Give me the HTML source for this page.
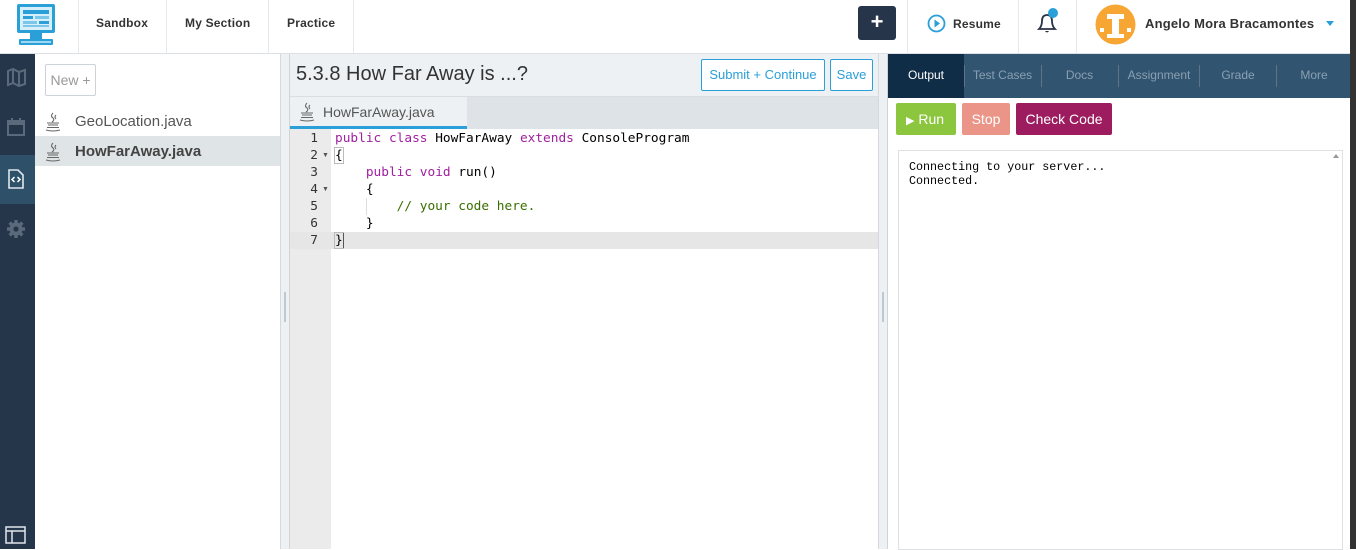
<!DOCTYPE html>
<html><head><style>
*{box-sizing:border-box;margin:0;padding:0}
body{width:1356px;height:549px;overflow:hidden;background:#fff;font-family:"Liberation Sans",sans-serif;position:relative}
.a{position:absolute}
.nav{font-size:12px;font-weight:bold;color:#333;letter-spacing:.2px}
.vl{position:absolute;top:0;height:53px;width:1px;background:#e6e9ec}
.code{font-family:"DejaVu Sans Mono",monospace;font-size:12.8px;line-height:17px;white-space:pre}
.kw{color:#a020a0}.cm{color:#3a6e00}
.tab{position:absolute;top:68px;font-size:12px;color:#8aa0b2;text-align:center}
</style></head><body>
<svg width="0" height="0" style="position:absolute"><defs><g id="java"><path d="M9 1 Q6 4 9 6 Q11 8 8 10 M12 3 Q10 5 12 7" fill="none" stroke="#666" stroke-width="1.1"/><path d="M3 11 H15 M4 13 H14 M3 15.5 H15 M2 18 Q9 20 16 18" fill="none" stroke="#666" stroke-width="1.1"/></g></defs></svg>
<!-- top bar -->
<div class="a" style="left:0;top:0;width:1350px;height:54px;background:#fff;border-bottom:1px solid #dde1e5"></div>
<svg class="a" style="left:16px;top:3px" width="40" height="42" viewBox="0 0 40 42">
<rect x="1" y="1" width="38" height="29" rx="2" fill="#2a9fd8"/>
<rect x="4" y="4" width="32" height="23" fill="#d6effb"/>
<rect x="7" y="7" width="26" height="4" fill="#2a9fd8"/>
<rect x="7" y="13" width="10" height="3" fill="#2a9fd8"/><rect x="19" y="13" width="14" height="3" fill="#7cc6ea"/>
<rect x="7" y="18" width="14" height="3" fill="#7cc6ea"/><rect x="23" y="18" width="10" height="3" fill="#2a9fd8"/>
<rect x="7" y="22" width="26" height="2" fill="#7cc6ea"/>
<rect x="14" y="30" width="12" height="6" fill="#2a9fd8"/>
<rect x="3" y="36" width="34" height="6" rx="1" fill="#2a9fd8"/><rect x="5" y="38" width="30" height="2" fill="#9dd6f2"/>
</svg>
<div class="vl" style="left:78px"></div><div class="vl" style="left:166px"></div><div class="vl" style="left:268px"></div><div class="vl" style="left:353px"></div>
<div class="a nav" style="left:96px;top:16px">Sandbox</div>
<div class="a nav" style="left:185px;top:16px">My Section</div>
<div class="a nav" style="left:287px;top:16px">Practice</div>
<div class="a" style="left:858px;top:6px;width:38px;height:34px;background:#27354a;border-radius:3px;color:#fff;font-size:22px;font-weight:bold;text-align:center;line-height:32px">+</div>
<div class="vl" style="left:907px"></div><div class="vl" style="left:1018px"></div><div class="vl" style="left:1076px"></div>
<svg class="a" style="left:927px;top:14px" width="19" height="19"><circle cx="9.5" cy="9.5" r="8" fill="none" stroke="#2a9fd8" stroke-width="1.8"/><path d="M7.5 5.5 L13 9.5 L7.5 13.5Z" fill="#2a9fd8"/></svg>
<div class="a nav" style="left:953px;top:17px">Resume</div>
<svg class="a" style="left:1035px;top:10px" width="24" height="26"><path d="M4 19 Q7 16 7 11 Q7 5 12 5 Q17 5 17 11 Q17 16 20 19 Z" fill="none" stroke="#2a3344" stroke-width="1.8"/><path d="M10 21 Q12 24 14 21" fill="#2a3344"/></svg>
<div class="a" style="left:1048px;top:8px;width:10px;height:10px;border-radius:50%;background:#2a9fd8"></div>
<svg class="a" style="left:1095px;top:4px" width="41" height="41"><circle cx="20.5" cy="20.5" r="20" fill="#f7a533"/><rect x="12" y="10" width="17" height="5" fill="#fff"/><rect x="17" y="15" width="7" height="15" fill="#fff"/><rect x="12" y="30" width="17" height="4" fill="#fff"/><rect x="5" y="24" width="4" height="4" fill="#fff"/><rect x="32" y="24" width="4" height="4" fill="#fff"/></svg>
<div class="a" style="left:1145px;top:16px;font-size:13px;font-weight:bold;color:#333;letter-spacing:.2px">Angelo Mora Bracamontes</div>
<div class="a" style="left:1326px;top:21px;width:0;height:0;border-left:4px solid transparent;border-right:4px solid transparent;border-top:5px solid #2a9fd8"></div>
<div class="a" style="left:1350px;top:0;width:6px;height:549px;background:#333"></div>

<!-- left sidebar -->
<div class="a" style="left:0;top:54px;width:35px;height:495px;background:#26364a"></div>
<div class="a" style="left:0;top:155px;width:35px;height:49px;background:#2e5169"></div>
<svg class="a" style="left:6px;top:67px" width="22" height="20"><path d="M2 4 L7 2 L13 5 L19 3 L19 17 L13 19 L7 16 L2 18Z M7 2 V16 M13 5 V19" fill="none" stroke="#5b6a7b" stroke-width="2"/></svg>
<svg class="a" style="left:6px;top:117px" width="20" height="20"><rect x="2" y="4" width="16" height="14" fill="none" stroke="#5b6a7b" stroke-width="2"/><rect x="2" y="4" width="16" height="4" fill="#5b6a7b"/><path d="M6 1V5M14 1V5" stroke="#5b6a7b" stroke-width="2"/></svg>
<svg class="a" style="left:7px;top:168px" width="18" height="22"><path d="M2 2 H11 L16 7 V20 H2Z" fill="none" stroke="#dfe6ec" stroke-width="1.6"/><path d="M7.5 9 L5 11.5 L7.5 14 M10.5 9 L13 11.5 L10.5 14" fill="none" stroke="#fff" stroke-width="1.5"/></svg>
<svg class="a" style="left:6px;top:219px" width="20" height="20" viewBox="0 0 20 20"><g fill="#5b6a7b"><circle cx="10" cy="10" r="6.5"/><rect x="8.3" y="1" width="3.4" height="18"/><rect x="1" y="8.3" width="18" height="3.4"/><rect x="8.3" y="1" width="3.4" height="18" transform="rotate(45 10 10)"/><rect x="8.3" y="1" width="3.4" height="18" transform="rotate(-45 10 10)"/></g><circle cx="10" cy="10" r="2.6" fill="#26364a"/></svg>
<svg class="a" style="left:5px;top:526px" width="21" height="18"><rect x="1" y="1" width="19" height="16" fill="none" stroke="#e0e6ec" stroke-width="1.5"/><path d="M1 5 H20 M7 5 V17" stroke="#e0e6ec" stroke-width="1.5"/></svg>

<!-- file panel -->
<div class="a" style="left:45px;top:64px;width:51px;height:32px;border:1px solid #ccd3d9;border-radius:2px;color:#999;font-size:14px;line-height:30px;text-align:center">New +</div>
<div class="a" style="left:35px;top:136px;width:245px;height:30px;background:#dfe4e7"></div>
<svg class="a" style="left:44px;top:112px" width="18" height="20"><use href="#java"/></svg>
<div class="a" style="left:75px;top:113px;font-size:15px;color:#555">GeoLocation.java</div>
<svg class="a" style="left:44px;top:142px" width="18" height="20"><use href="#java"/></svg>
<div class="a" style="left:75px;top:143px;font-size:15px;color:#444;font-weight:bold">HowFarAway.java</div>

<!-- divider 1 -->
<div class="a" style="left:280px;top:54px;width:10px;height:495px;background:#eef1f4;border-left:1px solid #d5d9dd;border-right:1px solid #d0d4d8"></div>
<div class="a" style="left:284px;top:292px;width:2px;height:30px;background:#bccbd3"></div>

<!-- editor -->
<div class="a" style="left:290px;top:54px;width:588px;height:43px;background:#eef1f4;border-bottom:1px solid #d9dee2"></div>
<div class="a" style="left:296px;top:63px;font-size:20px;color:#333">5.3.8 How Far Away is ...?</div>
<div class="a" style="left:701px;top:59px;width:124px;height:32px;border:1px solid #2a9fd8;border-radius:2px;color:#2a9fd8;font-size:13px;line-height:30px;text-align:center;background:#fff">Submit + Continue</div>
<div class="a" style="left:830px;top:59px;width:43px;height:32px;border:1px solid #2a9fd8;border-radius:2px;color:#2a9fd8;font-size:13px;line-height:30px;text-align:center;background:#fff">Save</div>
<div class="a" style="left:290px;top:97px;width:588px;height:32px;background:#dde3e6"></div>
<div class="a" style="left:290px;top:97px;width:177px;height:32px;background:#eef1f4;border-bottom:3px solid #2a9fd8"></div>
<svg class="a" style="left:298px;top:102px" width="18" height="20"><use href="#java"/></svg>
<div class="a" style="left:323px;top:104px;font-size:14px;color:#555">HowFarAway.java</div>
<div class="a" style="left:290px;top:129px;width:41px;height:420px;background:#ebebeb"></div>
<div class="a" style="left:290px;top:232px;width:588px;height:17px;background:#e6e6e6"></div>
<div class="a code" style="left:290px;top:130px;width:28px;text-align:right;color:#333">1
2
3
4
5
6
7</div>
<div class="a" style="left:322px;top:147px;font-size:7px;color:#555;line-height:17px">▼<br><br>▼</div>
<div class="a code" style="left:335px;top:130px;color:#000"><span class="kw">public</span> <span class="kw">class</span> HowFarAway <span class="kw">extends</span> ConsoleProgram
<span style="outline:1px solid #bbb">{</span>
    <span class="kw">public</span> <span class="kw">void</span> run()
    {
        <span class="cm">// your code here.</span>
    }
<span style="outline:1px solid #bbb">}</span></div>
<div class="a" style="left:343px;top:233px;width:1px;height:15px;background:#555"></div>
<div class="a" style="left:366px;top:198px;width:1px;height:17px;background:#ddd"></div>

<!-- divider 2 -->
<div class="a" style="left:878px;top:54px;width:10px;height:495px;background:#eef1f4;border-left:1px solid #d5d9dd;border-right:1px solid #d0d4d8"></div>
<div class="a" style="left:882px;top:292px;width:2px;height:30px;background:#bccbd3"></div>

<!-- right panel -->
<div class="a" style="left:888px;top:54px;width:462px;height:44px;background:#315470"></div>
<div class="a" style="left:888px;top:54px;width:76px;height:44px;background:#0f2d46"></div>
<div class="tab" style="left:888px;width:76px;color:#fff">Output</div>
<div class="tab" style="left:964px;width:77px">Test Cases</div>
<div class="tab" style="left:1041px;width:77px">Docs</div>
<div class="tab" style="left:1118px;width:82px">Assignment</div>
<div class="tab" style="left:1200px;width:76px">Grade</div>
<div class="tab" style="left:1276px;width:76px">More</div>
<div class="a" style="left:964px;top:65px;width:1px;height:22px;background:#5d7489"></div>
<div class="a" style="left:1041px;top:65px;width:1px;height:22px;background:#5d7489"></div>
<div class="a" style="left:1118px;top:65px;width:1px;height:22px;background:#5d7489"></div>
<div class="a" style="left:1199px;top:65px;width:1px;height:22px;background:#5d7489"></div>
<div class="a" style="left:1276px;top:65px;width:1px;height:22px;background:#5d7489"></div>
<div class="a" style="left:896px;top:103px;width:60px;height:32px;background:#8cc63f;border-radius:2px;color:#fff;font-size:14px;line-height:32px;padding-left:10px"><span style="font-size:11px">▶</span> Run</div>
<div class="a" style="left:962px;top:103px;width:48px;height:32px;background:#ea9587;border-radius:2px;color:#fff;font-size:14px;line-height:32px;text-align:center">Stop</div>
<div class="a" style="left:1016px;top:103px;width:96px;height:32px;background:#9c1c5f;border-radius:2px;color:#fff;font-size:14px;line-height:32px;text-align:center">Check Code</div>
<div class="a" style="left:898px;top:150px;width:445px;height:400px;border:1px solid #dde1e4"></div>
<div class="a" style="left:1333px;top:154px;width:0;height:0;border-left:3px solid transparent;border-right:3px solid transparent;border-bottom:4px solid #999"></div>
<div class="a" style="left:909px;top:160px;font-family:'Liberation Mono',monospace;font-size:11.7px;line-height:14px;color:#000;white-space:pre">Connecting to your server...
Connected.</div>
</body></html>
